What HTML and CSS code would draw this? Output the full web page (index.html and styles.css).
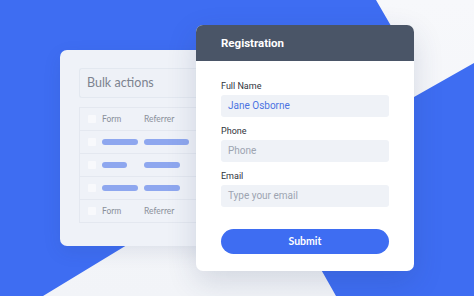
FILE: index.html
```html
<!DOCTYPE html>
<html lang="en">
<head>
<meta charset="utf-8">
<title>Registration</title>
<link rel="stylesheet" href="styles.css">
</head>
<body>
<div class="stage">
  <svg class="bg" width="474" height="296" viewBox="0 0 474 296" aria-hidden="true">
    <polygon fill="#3e6df2" points="0,0 376,0 405,50 414,97 474,63 474,296 336,296 310,250 150,231 43,296 0,296"/>
  </svg>

  <section class="panel">
    <div class="bulk">Bulk actions</div>
    <div class="table">
      <div class="row">
        <span class="check"></span><span class="col1 txt">Form</span><span class="txt">Referrer</span>
      </div>
      <div class="row">
        <span class="check"></span><span class="col1"><i class="bar w36"></i></span><i class="bar w45"></i>
      </div>
      <div class="row">
        <span class="check"></span><span class="col1"><i class="bar w25"></i></span><i class="bar w36"></i>
      </div>
      <div class="row">
        <span class="check"></span><span class="col1"><i class="bar w36"></i></span><i class="bar w36"></i>
      </div>
      <div class="row">
        <span class="check"></span><span class="col1 txt">Form</span><span class="txt">Referrer</span>
      </div>
    </div>
  </section>

  <section class="card">
    <header class="card-head">Registration</header>
    <form class="card-body">
      <div class="field">
        <label class="label">Full Name</label>
        <div class="input filled">Jane Osborne</div>
      </div>
      <div class="field">
        <label class="label">Phone</label>
        <div class="input">Phone</div>
      </div>
      <div class="field">
        <label class="label">Email</label>
        <div class="input">Type your email</div>
      </div>
      <div class="submit">Submit</div>
    </form>
  </section>
</div>
</body>
</html>
```

FILE: styles.css
```css
* { box-sizing: border-box; }
html, body { margin: 0; padding: 0; }
body {
  width: 474px;
  height: 296px;
  overflow: hidden;
  font-family: Roboto, "Liberation Sans", sans-serif;
}
.stage {
  position: relative;
  width: 474px;
  height: 296px;
  background: linear-gradient(180deg, #f7f8fb 0%, #f2f4f8 100%);
  padding: 50px 0 0 60px;
}
.bg {
  position: absolute;
  left: 0;
  top: 0;
  display: block;
}

/* left panel */
.panel {
  position: relative;
  width: 160px;
  height: 196px;
  background: #eff2f8;
  border-radius: 7px;
  box-shadow: 0 6px 18px rgba(40, 60, 110, 0.10);
  padding: 18px 0 0 19px;
  font-family: Lato, "Open Sans", sans-serif;
}
.bulk {
  height: 30px;
  border: 1px solid #e3e8f0;
  border-right: none;
  border-radius: 3px 0 0 3px;
  background: #eef1f7;
  color: #7d838f;
  font-size: 12.5px;
  line-height: 28px;
  padding-left: 7px;
}
.table {
  margin-top: 9px;
  border: 1px solid #e4e8f0;
  border-right: none;
  border-bottom: none;
}
.row {
  height: 23px;
  display: flex;
  align-items: center;
  padding-left: 8px;
  border-bottom: 1px solid #e4e8f0;
}
.check {
  width: 8px;
  height: 8px;
  background: #f8f9fc;
  border-radius: 1px;
  margin-right: 6px;
  flex: none;
}
.col1 {
  width: 42px;
  flex: none;
  display: flex;
  align-items: center;
}
.txt {
  font-size: 8.5px;
  color: #8a909b;
}
.bar {
  display: block;
  height: 6px;
  border-radius: 3px;
  background: #8ea7ef;
}
.w25 { width: 25px; }
.w36 { width: 36px; }
.w45 { width: 45px; }

/* registration card */
.card {
  position: absolute;
  left: 196px;
  top: 25px;
  width: 218px;
  height: 246px;
  background: #ffffff;
  border-radius: 7px;
  overflow: hidden;
  box-shadow: 0 10px 30px rgba(35, 55, 100, 0.16);
}
.card-head {
  height: 36px;
  background: #4a5567;
  color: #ffffff;
  font-weight: 700;
  font-size: 11.5px;
  line-height: 36px;
  padding-left: 25px;
}
.card-body {
  margin: 0;
  padding: 19px 25px 17px 25px;
}
.field { margin-bottom: 8px; }
.label {
  display: block;
  font-size: 9px;
  line-height: 12px;
  color: #2f343c;
  margin-bottom: 3px;
}
.input {
  height: 22px;
  background: #eff2f7;
  border-radius: 3px;
  font-size: 10px;
  line-height: 22px;
  padding-left: 7px;
  color: #9da4b1;
}
.input.filled { color: #4c72e2; }
.submit {
  margin-top: 22px;
  height: 25px;
  border-radius: 13px;
  background: #3e6df2;
  color: #ffffff;
  font-family: Lato, "Open Sans", sans-serif;
  font-weight: 700;
  font-size: 10.5px;
  line-height: 25px;
  text-align: center;
}
```
